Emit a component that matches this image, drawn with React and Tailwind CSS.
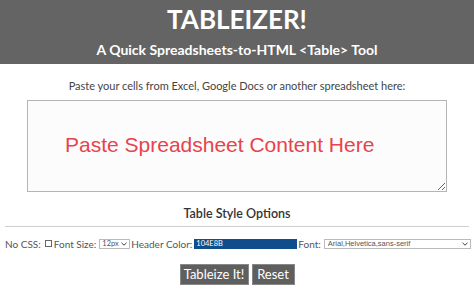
import { useState } from 'react'

const Chevron = () => (
  <svg className="absolute right-[3px] top-1/2 -translate-y-1/2 w-[6px] h-[4px] pointer-events-none" viewBox="0 0 6 4" fill="none" stroke="#444" strokeWidth="1">
    <path d="M0.5 0.8 L3 3.2 L5.5 0.8" />
  </svg>
)

export default function App() {
  const [noCss, setNoCss] = useState(false)
  const [fontSize, setFontSize] = useState('12px')
  const [color, setColor] = useState('104E8B')
  const [font, setFont] = useState('Arial,Helvetica,sans-serif')

  return (
    <div className="min-h-screen bg-white text-[#444]" style={{ fontFamily: 'Lato, "Open Sans", sans-serif' }}>
      {/* Header */}
      <header className="h-[64px] bg-[#646464] flex flex-col items-center text-white">
        <h1 className="text-[26px] font-bold leading-none mt-[6px]">TABLEIZER!</h1>
        <p className="text-[14px] font-bold leading-none mt-[11px]">A Quick Spreadsheets-to-HTML &lt;Table&gt; Tool</p>
      </header>

      {/* Input */}
      <p className="text-center text-[11px] leading-none mt-[16px]">
        Paste your cells from Excel, Google Docs or another spreadsheet here:
      </p>
      <div className="flex justify-center mt-[9px]">
        <textarea
          placeholder="Paste Spreadsheet Content Here"
          className="w-[420px] h-[92px] border border-[#b4b4b4] bg-[#fcfcfc] pt-[28px] pl-[37px] text-[21px] text-[#333] placeholder:text-[#e8434c] outline-none"
          style={{ fontFamily: '"Liberation Sans", Arial, sans-serif' }}
        />
      </div>

      {/* Options */}
      <h3 className="mx-[5px] mt-[16px] pb-[5px] border-b border-[#cfcfcf] text-center text-[12.5px] font-semibold text-[#333] leading-none">
        Table Style Options
      </h3>
      <div className="flex items-center whitespace-nowrap px-[5px] mt-[12px] text-[10px] leading-none text-[#555]">
        <span>No CSS:</span>
        <input
          type="checkbox"
          checked={noCss}
          onChange={e => setNoCss(e.target.checked)}
          className="appearance-none w-[7px] h-[7px] ml-[4px] mr-[2px] border border-[#666] bg-white shrink-0"
        />
        <span>Font Size:</span>
        <div className="relative ml-[3px] shrink-0">
          <select
            value={fontSize}
            onChange={e => setFontSize(e.target.value)}
            className="appearance-none w-[31px] h-[10px] border border-[#bbb] bg-white text-[7.5px] leading-none pl-[2px] block"
          >
            <option>10px</option>
            <option>12px</option>
            <option>14px</option>
          </select>
          <Chevron />
        </div>
        <span className="ml-[1px]">Header Color:</span>
        <input
          value={color}
          onChange={e => setColor(e.target.value)}
          className="ml-[2px] w-[103px] h-[10px] bg-[#104E8B] text-white text-[7.5px] px-[2px] outline-none shrink-0"
        />
        <span className="ml-[1px]">Font:</span>
        <div className="relative ml-[3px] shrink-0">
          <select
            value={font}
            onChange={e => setFont(e.target.value)}
            className="appearance-none w-[147px] h-[10px] border border-[#bbb] bg-white text-[7.5px] leading-none pl-[3px] block"
            style={{ fontFamily: '"Liberation Sans", Arial, sans-serif' }}
          >
            <option>Arial,Helvetica,sans-serif</option>
            <option>Georgia,serif</option>
            <option>Verdana,sans-serif</option>
          </select>
          <Chevron />
        </div>
      </div>

      <div className="flex justify-center gap-[3px] mt-[15px]">
        <button className="w-[69px] h-[21px] bg-[#5f5f5f] text-white text-[13px] leading-none border border-[#888]">Tableize It!</button>
        <button className="w-[43px] h-[21px] bg-[#5f5f5f] text-white text-[13px] leading-none border border-[#888]">Reset</button>
      </div>
    </div>
  )
}
